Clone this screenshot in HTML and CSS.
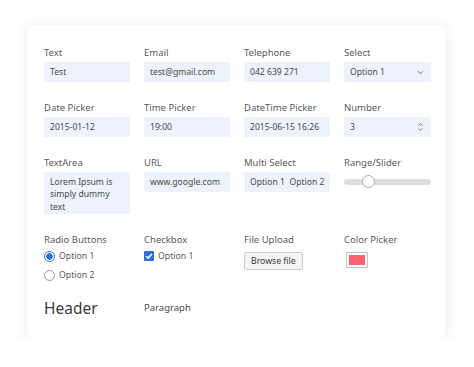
FILE: index.html
```html
<!DOCTYPE html>
<html lang="en">
<head>
    <meta charset="UTF-8">
    <meta name="viewport" content="width=device-width, initial-scale=1.0">
    <title>Form Elements</title>
    <link rel="stylesheet" href="styles.css">
</head>
<body>
    <div class="card">
        <div class="form-grid">
            <div class="field">
                <div class="label">Text</div>
                <div class="box">Test</div>
            </div>
            <div class="field">
                <div class="label">Email</div>
                <div class="box">test@gmail.com</div>
            </div>
            <div class="field">
                <div class="label">Telephone</div>
                <div class="box">042 639 271</div>
            </div>
            <div class="field">
                <div class="label">Select</div>
                <div class="box box-icon">
                    <span>Option 1</span>
                    <svg class="chevron" viewBox="0 0 8 6" width="7" height="5">
                        <path d="M1 1.5 L4 4.5 L7 1.5" fill="none" stroke="#666" stroke-width="1.1" />
                    </svg>
                </div>
            </div>

            <div class="field">
                <div class="label">Date Picker</div>
                <div class="box">2015-01-12</div>
            </div>
            <div class="field">
                <div class="label">Time Picker</div>
                <div class="box">19:00</div>
            </div>
            <div class="field">
                <div class="label">DateTime Picker</div>
                <div class="box">2015-06-15 16:26</div>
            </div>
            <div class="field">
                <div class="label">Number</div>
                <div class="box box-icon">
                    <span>3</span>
                    <svg class="spinner" viewBox="0 0 8 12" width="7" height="10">
                        <path d="M1.5 4.5 L4 2 L6.5 4.5 M1.5 7.5 L4 10 L6.5 7.5" fill="none" stroke="#666" stroke-width="1" />
                    </svg>
                </div>
            </div>

            <div class="field">
                <div class="label">TextArea</div>
                <div class="box box-area">Lorem Ipsum is simply dummy text</div>
            </div>
            <div class="field">
                <div class="label">URL</div>
                <div class="box">www.google.com</div>
            </div>
            <div class="field">
                <div class="label">Multi Select</div>
                <div class="box">Option 1&nbsp; Option 2</div>
            </div>
            <div class="field">
                <div class="label">Range/Slider</div>
                <div class="slider">
                    <div class="track"></div>
                    <div class="thumb"></div>
                </div>
            </div>

            <div class="field">
                <div class="label">Radio Buttons</div>
                <div class="options">
                    <div class="option">
                        <span class="radio checked"></span>
                        <span>Option 1</span>
                    </div>
                    <div class="option">
                        <span class="radio"></span>
                        <span>Option 2</span>
                    </div>
                </div>
            </div>
            <div class="field">
                <div class="label">Checkbox</div>
                <div class="options">
                    <div class="option">
                        <span class="checkbox">
                            <svg viewBox="0 0 10 10" width="10" height="10">
                                <path d="M2.2 5.2 L4.2 7.1 L7.9 3" fill="none" stroke="#fff" stroke-width="1.5" />
                            </svg>
                        </span>
                        <span>Option 1</span>
                    </div>
                </div>
            </div>
            <div class="field">
                <div class="label">File Upload</div>
                <div class="button">Browse file</div>
            </div>
            <div class="field">
                <div class="label">Color Picker</div>
                <div class="swatch"><span></span></div>
            </div>

            <div class="header">Header</div>
            <div class="paragraph">Paragraph</div>
        </div>
    </div>
</body>
</html>
```

FILE: styles.css
```css
body {
    margin: 0;
    background-color: #fff;
    font-family: 'Noto Sans', sans-serif;
    font-size: 9.5px;
    color: #4a4a4a;
}

.card {
    width: 419px;
    box-sizing: border-box;
    margin: 25px 0 0 27px;
    padding: 21px 15px 21px 17px;
    background-color: #fff;
    border-radius: 8px;
    box-shadow: 0 2px 16px rgba(0, 0, 0, 0.09);
}

.form-grid {
    display: grid;
    grid-template-columns: 86px 86px 86px 87px;
    column-gap: 14px;
    row-gap: 19px;
}

.label {
    line-height: 14px;
    margin-bottom: 2px;
    color: #5a5a5a;
}

.box {
    height: 20px;
    line-height: 20px;
    padding: 0 6px;
    background-color: #edf2fc;
    color: #4a4a4a;
    font-size: 8.6px;
    white-space: nowrap;
}

.box-icon {
    display: flex;
    align-items: center;
    justify-content: space-between;
    padding-right: 7px;
}

.box-area {
    height: 42px;
    line-height: 12.3px;
    padding: 4px 6px 0;
    box-sizing: border-box;
    white-space: normal;
}

.slider {
    position: relative;
    height: 20px;
}

.track {
    position: absolute;
    left: 0;
    right: 0;
    top: 7px;
    height: 6px;
    border-radius: 3px;
    background-color: #ddd;
}

.thumb {
    position: absolute;
    left: 18px;
    top: 3px;
    width: 11px;
    height: 11px;
    border-radius: 50%;
    background-color: #fff;
    border: 1px solid #aaa;
}

.options {
    display: flex;
    flex-direction: column;
    gap: 5px;
}

.option {
    display: flex;
    align-items: center;
    gap: 4px;
    height: 14px;
    font-size: 8.7px;
    color: #5a5a5a;
}

.radio {
    width: 9px;
    height: 9px;
    border-radius: 50%;
    border: 1px solid #999;
    background-color: #fff;
}

.radio.checked {
    border-color: #2f6fe4;
    background: radial-gradient(circle, #2f6fe4 0 3px, #fff 3.5px);
}

.checkbox {
    width: 10px;
    height: 10px;
    border-radius: 1px;
    background-color: #2f6fe4;
    display: flex;
}

.button {
    display: inline-block;
    margin-top: 3px;
    padding: 0 6px;
    height: 16px;
    line-height: 16px;
    font-size: 8.7px;
    border: 1px solid #ccc;
    border-radius: 2px;
    background-color: #f4f4f4;
    color: #3a3a3a;
}

.swatch {
    display: inline-flex;
    margin: 3px 0 0 2px;
    width: 22px;
    height: 16px;
    box-sizing: border-box;
    border: 1px solid #c8c8c8;
    padding: 2px;
    background-color: #fff;
}

.swatch span {
    flex: 1;
    background-color: #ff6468;
}

.header {
    font-size: 15.5px;
    line-height: 20px;
    color: #3a3a3a;
    margin-top: -3px;
}

.paragraph {
    align-self: center;
    margin-top: -4px;
    color: #4a4a4a;
}
```
